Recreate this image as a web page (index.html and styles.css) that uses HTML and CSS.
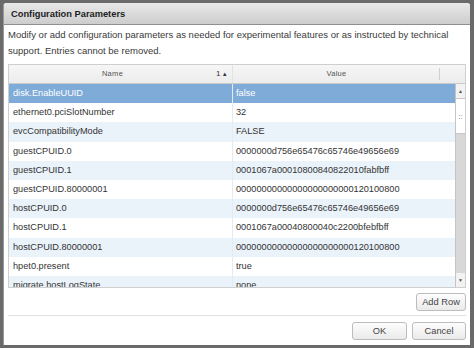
FILE: index.html
```html
<!DOCTYPE html>
<html lang="en">
  <head>
    <meta charset="UTF-8" />
    <title>Configuration Parameters</title>
    <link rel="stylesheet" href="styles.css">
  </head>
  <body>
    <div class="dialog">
      <div class="title">Configuration Parameters</div>
      <div class="content">
        <p class="desc">Modify or add configuration parameters as needed for experimental features or as instructed by technical support. Entries cannot be removed.</p>

        <!-- parameter grid -->
        <div class="grid">
          <div class="gridHead">
            <div class="hName">Name</div>
            <div class="hSort">1 <span class="arrow">&#9650;</span></div>
            <div class="hValue">Value</div>
            <div class="hEnd"></div>
          </div>
          <div class="gridBody">
            <div class="rows">
              <div class="row selected"><span class="cName">disk.EnableUUID</span><span class="cValue">false</span></div>
              <div class="row"><span class="cName">ethernet0.pciSlotNumber</span><span class="cValue">32</span></div>
              <div class="row alt"><span class="cName">evcCompatibilityMode</span><span class="cValue">FALSE</span></div>
              <div class="row"><span class="cName">guestCPUID.0</span><span class="cValue">0000000d756e65476c65746e49656e69</span></div>
              <div class="row alt"><span class="cName">guestCPUID.1</span><span class="cValue">0001067a00010800840822010fabfbff</span></div>
              <div class="row"><span class="cName">guestCPUID.80000001</span><span class="cValue">00000000000000000000000120100800</span></div>
              <div class="row alt"><span class="cName">hostCPUID.0</span><span class="cValue">0000000d756e65476c65746e49656e69</span></div>
              <div class="row"><span class="cName">hostCPUID.1</span><span class="cValue">0001067a00040800040c2200bfebfbff</span></div>
              <div class="row alt"><span class="cName">hostCPUID.80000001</span><span class="cValue">00000000000000000000000120100800</span></div>
              <div class="row"><span class="cName">hpet0.present</span><span class="cValue">true</span></div>
              <div class="row alt"><span class="cName">migrate.hostLogState</span><span class="cValue">none</span></div>
            </div>
            <div class="scrollbar">
              <div class="sbBtn">&#9650;</div>
              <div class="sbThumb">::</div>
              <div class="sbTrack"></div>
              <div class="sbBtn">&#9660;</div>
            </div>
          </div>
        </div>

        <div class="addBar">
          <button class="btn addRow">Add Row</button>
        </div>
      </div>
      <div class="footer">
        <button class="btn ok">OK</button>
        <button class="btn cancel">Cancel</button>
      </div>
    </div>
  </body>
</html>
```
FILE: styles.css
```css
body {
  margin: 0;
  padding: 0;
  width: 474px;
  height: 348px;
  background: #6a6a6a;
  font-family: "Liberation Sans", Arial, sans-serif;
  color: #333;
  overflow: hidden;
}

.dialog {
  margin: 3px 0 0 3px;
  width: 467px;
  height: 342px;
  background: #fff;
  border-radius: 3px 3px 0 0;
  display: flex;
  flex-direction: column;
  box-sizing: border-box;
  border-left: 1px solid #9a9a9a;
}

.title {
  height: 21px;
  line-height: 22px;
  padding-left: 7px;
  font-size: 9.3px;
  font-weight: bold;
  color: #222;
  background: linear-gradient(#e8e8e8, #cdcdcd);
  border-bottom: 1px solid #8f8f8f;
  border-radius: 3px 3px 0 0;
}

.content {
  padding: 0 4px 0 4px;
}

.desc {
  margin: 2px 0 5px 0;
  font-size: 9.5px;
  line-height: 16px;
  color: #3a3a3a;
}

.grid {
  border: 1px solid #cfcfcf;
  height: 222px;
  display: flex;
  flex-direction: column;
}

.gridHead {
  height: 18px;
  display: flex;
  font-size: 7.5px;
  color: #555;
  background: linear-gradient(#f6f6f6, #ececec);
  border-bottom: 1px solid #c9c9c9;
  line-height: 18px;
}

.hName {
  width: 207px;
  text-align: center;
  letter-spacing: 0.3px;
}

.hSort {
  width: 17px;
  font-size: 8px;
  color: #333;
  border-right: 1px solid #e2e2e2;
  box-sizing: border-box;
}

.arrow {
  font-size: 6px;
  margin-left: -1px;
}

.hValue {
  width: 207px;
  text-align: center;
  letter-spacing: 0.3px;
  position: relative;
}

.hValue::after {
  content: "";
  position: absolute;
  right: 0;
  top: 3px;
  height: 12px;
  border-right: 1px solid #cfcfcf;
}

.hEnd {
  flex: 1;
}

.gridBody {
  flex: 1;
  display: flex;
  overflow: hidden;
}

.rows {
  flex: 1;
  overflow: hidden;
}

.row {
  height: 19.2px;
  display: flex;
  font-size: 9.2px;
  line-height: 19.2px;
  background: #fff;
}

.row.alt {
  background: #eaf2fa;
}

.row.selected {
  background: #7eabd7;
  color: #fff;
}

.cName {
  width: 224px;
  padding-left: 4px;
  box-sizing: border-box;
  border-right: 1px solid #e4ebf2;
  white-space: nowrap;
}

.cValue {
  padding-left: 3px;
  white-space: nowrap;
}

.scrollbar {
  width: 9px;
  display: flex;
  flex-direction: column;
  background: #d8d8d8;
  border-left: 1px solid #c4c4c4;
}

.sbBtn {
  height: 14px;
  background: #f2f2f2;
  font-size: 5px;
  color: #555;
  text-align: center;
  line-height: 14px;
}

.sbThumb {
  height: 36px;
  background: #fff;
  border-top: 1px solid #c8c8c8;
  border-bottom: 1px solid #c8c8c8;
  box-sizing: border-box;
  font-size: 8px;
  color: #777;
  text-align: center;
  line-height: 36px;
}

.sbTrack {
  flex: 1;
}

.addBar {
  display: flex;
  justify-content: flex-end;
  padding: 5px 0 4px 0;
  border-bottom: 1px solid #e0e0e0;
}

.btn {
  font-family: "Liberation Sans", Arial, sans-serif;
  font-size: 9.3px;
  color: #444;
  height: 18px;
  padding: 0;
  background: linear-gradient(#fdfdfd, #eaeaea);
  border: 1px solid #bcbcbc;
  border-radius: 3px;
}

.addRow {
  width: 50px;
}

.footer {
  display: flex;
  justify-content: flex-end;
  gap: 5px;
  padding: 6px 4px 0 0;
}

.ok {
  width: 55px;
}

.cancel {
  width: 54px;
}
```
